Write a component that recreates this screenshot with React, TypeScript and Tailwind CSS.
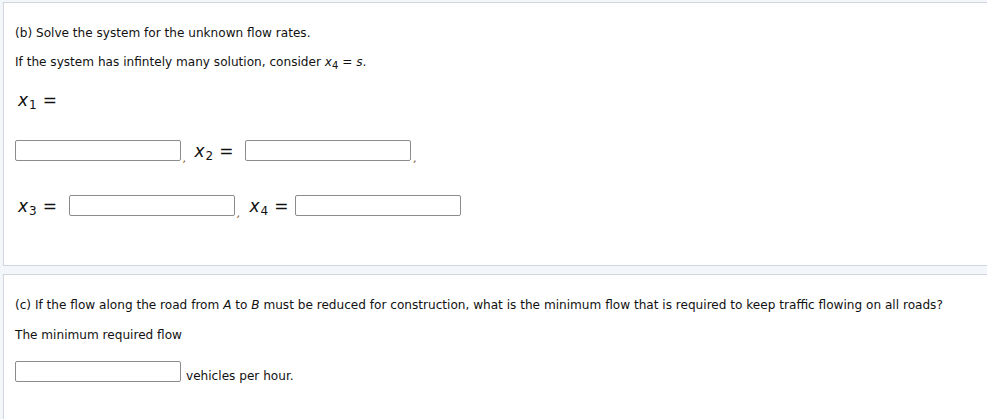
import React from 'react'

// ── bits ─────────────────────────────────────────────

function Box({ className = '' }: { className?: string }) {
  return <input type="text" className={`h-[21px] w-[166px] shrink-0 rounded-[2px] border border-[#8c8c8c] bg-white outline-none ${className}`} />
}

function Comma() {
  return <span className="self-end ml-[2px] mb-[-3px] text-[11px] leading-[10px] italic text-[#7a4a1a]">,</span>
}

function V({ n }: { n: number }) {
  return (
    <span className="inline-flex h-[20px] items-baseline text-[17px] leading-[20px] text-[#111]" style={{ fontFamily: '"DejaVu Sans", Verdana, sans-serif' }}>
      <span className="italic">x</span>
      <span className="text-[12px] leading-[12px] translate-y-[3px] ml-[1px]">{n}</span>
      <span className="ml-[6px]">=</span>
    </span>
  )
}

// ── App ──────────────────────────────────────────────

export default function App() {
  return (
    <div className="min-h-[419px] bg-[#f4f7fa] pt-[2px] pl-[3px] text-[12.1px] leading-[16px] text-[#111]" style={{ fontFamily: '"DejaVu Sans", Verdana, sans-serif' }}>

      {/* part b */}
      <div className="border-l border-t border-b border-[#cfd6df] bg-white pl-[11px] pt-[22px] pb-[49px]">
        <p className="h-[16px]">(b) Solve the system for the unknown flow rates.</p>
        <p className="mt-[13px] h-[16px]">
          If the system has infintely many solution, consider <i>x</i><span className="relative top-[3px] text-[10px]">4</span> = <i>s</i>.
        </p>
        <div className="mt-[20px] h-[20px] pl-[3px]"><V n={1} /></div>

        <div className="mt-[30px] flex h-[21px] items-center">
          <Box />
          <Comma />
          <span className="ml-[8px]"><V n={2} /></span>
          <Box className="ml-[12px]" />
          <Comma />
        </div>

        <div className="mt-[34px] flex h-[21px] items-center">
          <span className="ml-[3px]"><V n={3} /></span>
          <Box className="ml-[12px]" />
          <Comma />
          <span className="ml-[9px]"><V n={4} /></span>
          <Box className="ml-[7px]" />
        </div>
      </div>

      {/* part c */}
      <div className="mt-[8px] min-h-[145px] border-l border-t border-[#cfd6df] bg-white pl-[11px] pt-[22px]">
        <p className="h-[16px]">
          (c) If the flow along the road from <i>A</i> to <i>B</i> must be reduced for construction, what is the minimum flow that is required to keep traffic flowing on all roads?
        </p>
        <p className="mt-[14px] h-[16px]">The minimum required flow</p>
        <div className="mt-[18px] flex h-[21px] items-center">
          <Box />
          <span className="ml-[5px] translate-y-[4px]">vehicles per hour.</span>
        </div>
      </div>
    </div>
  )
}
